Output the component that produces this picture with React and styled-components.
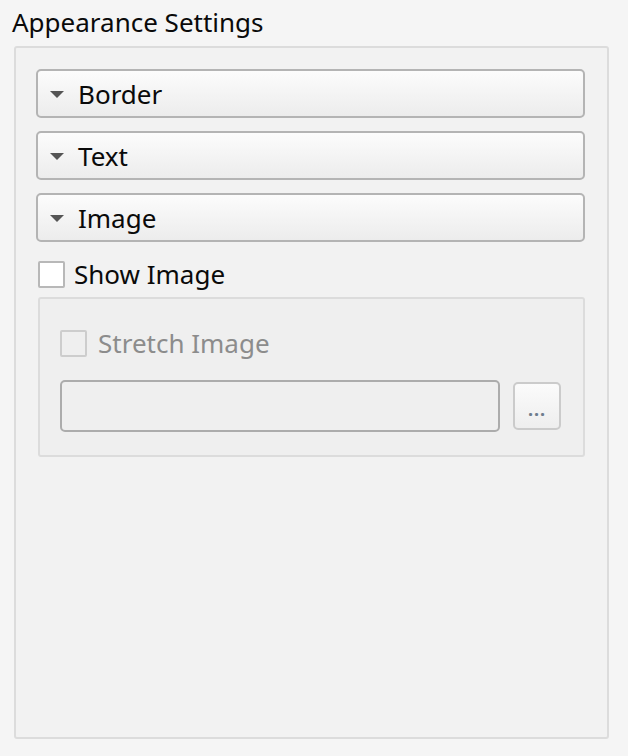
import React from 'react';
import styled, { createGlobalStyle } from 'styled-components';

const Global = createGlobalStyle`
    html, body {
        margin: 0;
        padding: 0;
        background: #f5f5f5;
        font-family: "Noto Sans", "Open Sans", sans-serif;
        color: #0a0a0a;
    }
`

const Page = styled.div`
    width: 628px;
    height: 756px;
    display: flex;
    flex-direction: column;
    box-sizing: border-box;
`

const Title = styled.div`
    font-size: 26px;
    line-height: 33px;
    margin: 6px 0 0 12px;
`

const GroupBox = styled.div`
    margin: 7px 19px 0 14px;
    height: 693px;
    box-sizing: border-box;
    border: 2px solid #dcdcdc;
    border-radius: 3px;
    background: #f2f2f2;
    padding: 21px 22px 0 20px;
    display: flex;
    flex-direction: column;
`

// collapsible section headers
const SectionButton = styled.div`
    height: 49px;
    box-sizing: border-box;
    border: 2px solid #b4b4b4;
    border-radius: 5px;
    background: linear-gradient(#fcfcfc, #ececec);
    display: flex;
    align-items: center;
    padding-left: 12px;
    gap: 14px;
    font-size: 26px;
    margin-bottom: 13px;
`

const Arrow = styled.span`
    width: 0;
    height: 0;
    border-left: 7px solid transparent;
    border-right: 7px solid transparent;
    border-top: 7px solid #555;
    margin-top: 2px;
`

const CheckRow = styled.label`
    display: flex;
    align-items: center;
    gap: ${p => p.$gap || 9}px;
    font-size: 26px;
    line-height: 32px;
    color: ${p => p.$disabled ? '#8c8c8c' : '#0a0a0a'};
`

const Box = styled.span`
    width: 27px;
    height: 27px;
    box-sizing: border-box;
    border: 2px solid ${p => p.$disabled ? '#cdcdcd' : '#b8b8b8'};
    background: ${p => p.$disabled ? '#efefef' : '#fff'};
    border-radius: 2px;
`

const InnerGroup = styled.div`
    margin: 7px 0 0 2px;
    box-sizing: border-box;
    border: 2px solid #dcdcdc;
    border-radius: 3px;
    background: #efefef;
    padding: 28px 22px 23px 20px;
    display: flex;
    flex-direction: column;
    gap: 21px;
`

const PathRow = styled.div`
    display: flex;
    align-items: center;
    gap: 13px;
`

const LineEdit = styled.div`
    flex: 1;
    height: 52px;
    box-sizing: border-box;
    border: 2px solid #acacac;
    border-radius: 5px;
    background: #efefef;
`

const BrowseButton = styled.div`
    width: 48px;
    height: 48px;
    box-sizing: border-box;
    border: 2px solid #cbcbcb;
    border-radius: 5px;
    background: linear-gradient(#fbfbfb, #eeeeee);
    color: #6d7d8d;
    font-size: 18px;
    font-weight: bold;
    display: flex;
    align-items: center;
    justify-content: center;
    padding-top: 6px;
    letter-spacing: 1px;
`

const App = () => {
  return (
    <Page>
        <Global />
        <Title>Appearance Settings</Title>
        <GroupBox>
            <SectionButton><Arrow />Border</SectionButton>
            <SectionButton><Arrow />Text</SectionButton>
            <SectionButton><Arrow />Image</SectionButton>
            <CheckRow style={{ marginLeft: 2, marginTop: 3 }}>
                <Box />Show Image
            </CheckRow>
            <InnerGroup>
                <CheckRow $disabled $gap={11}>
                    <Box $disabled />Stretch Image
                </CheckRow>
                <PathRow>
                    <LineEdit />
                    <BrowseButton>...</BrowseButton>
                </PathRow>
            </InnerGroup>
        </GroupBox>
    </Page>
  )
}

export default App;
